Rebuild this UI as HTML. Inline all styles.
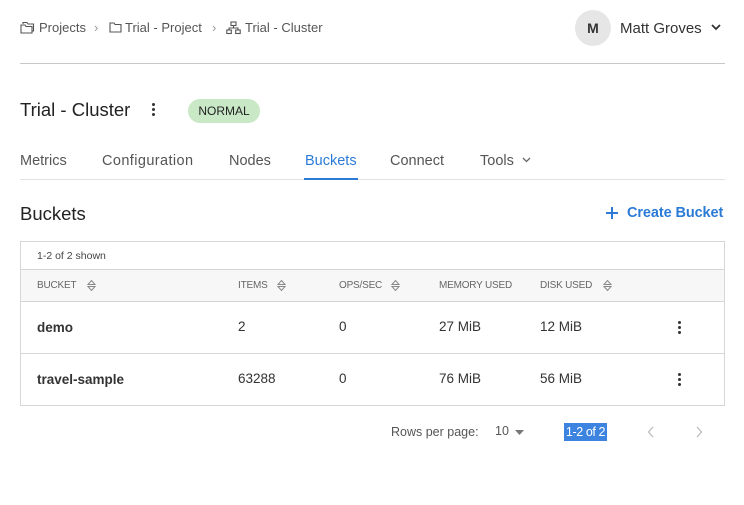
<!DOCTYPE html>
<html><head><meta charset="utf-8"><style>
*{margin:0;padding:0;box-sizing:border-box}
body{width:744px;height:505px;background:#fff;font-family:"Liberation Sans",sans-serif;color:#222;position:relative;overflow:hidden}
.a{position:absolute;white-space:nowrap}
.bc{font-size:13px;color:#555;top:20px}
.tab{font-size:14.5px;color:#555;top:153px}
.th{font-size:10px;color:#666;top:280px;letter-spacing:-0.2px}
.td{font-size:13.5px;color:#333}
.k{position:absolute;width:3px;height:3px;background:#333;border-radius:50%}
svg{position:absolute}
.s{position:absolute;top:279px}
</style></head><body>
<svg style="left:20px;top:21px" width="15" height="13" viewBox="0 0 15 13" fill="none" stroke="#555" stroke-width="1.1"><path d="M3 3V1.5h4l1 1.5h5.5v7H12"/><path d="M1 4h4l1 1.5h6V12H1z"/></svg>
<div class="a bc" style="left:39px">Projects</div>
<div class="a bc" style="left:94px;color:#999">›</div>
<svg style="left:109px;top:22px" width="13" height="11" viewBox="0 0 13 11" fill="none" stroke="#555" stroke-width="1.1"><path d="M1 1h4l1 1.5h6V10H1z"/></svg>
<div class="a bc" style="left:125px">Trial - Project</div>
<div class="a bc" style="left:212px;color:#999">›</div>
<svg style="left:226px;top:21px" width="15" height="14" viewBox="0 0 15 14" fill="none" stroke="#555" stroke-width="1.1"><rect x="5" y="1" width="5" height="3.5"/><path d="M7.5 4.5V7M3 9V7h9v2"/><rect x="0.8" y="9" width="4.5" height="3.5"/><rect x="9.7" y="9" width="4.5" height="3.5"/></svg>
<div class="a bc" style="left:245px">Trial - Cluster</div>
<div class="a" style="left:575px;top:10px;width:36px;height:36px;border-radius:50%;background:#e6e6e6;font-size:14px;font-weight:bold;color:#333;text-align:center;line-height:36px">M</div>
<div class="a" style="left:620px;top:20px;font-size:15px;color:#333">Matt Groves</div>
<svg style="left:711px;top:24px" width="10" height="7" viewBox="0 0 10 7" fill="none" stroke="#333" stroke-width="1.8"><path d="M1 1l4 4 4-4"/></svg>
<div class="a" style="left:20px;top:63px;width:705px;height:1px;background:#c8c8c8"></div>
<div class="a" style="left:20px;top:99px;font-size:18.5px;color:#222">Trial - Cluster</div>
<div class="k" style="left:152px;top:103px"></div><div class="k" style="left:152px;top:108px"></div><div class="k" style="left:152px;top:113px"></div>
<div class="a" style="left:188px;top:99px;width:72px;height:24px;border-radius:12px;background:#c9e8c6;font-size:12px;color:#222;text-align:center;line-height:24px">NORMAL</div>
<div class="a tab" style="left:20px">Metrics</div>
<div class="a tab" style="left:102px;letter-spacing:0.4px">Configuration</div>
<div class="a tab" style="left:229px">Nodes</div>
<div class="a tab" style="left:305px;color:#2b7bd6">Buckets</div>
<div class="a tab" style="left:390px">Connect</div>
<div class="a tab" style="left:480px">Tools</div>
<svg style="left:522px;top:157px" width="9" height="6" viewBox="0 0 9 6" fill="none" stroke="#666" stroke-width="1.3"><path d="M1 1l3.5 3.5L8 1"/></svg>
<div class="a" style="left:20px;top:179px;width:705px;height:1px;background:#e2e2e2"></div>
<div class="a" style="left:304px;top:178px;width:54px;height:2px;background:#2b7bd6"></div>
<div class="a" style="left:20px;top:203px;font-size:18.5px;color:#222">Buckets</div>
<svg style="left:605px;top:206px" width="14" height="14" viewBox="0 0 14 14" stroke="#2b7bd6" stroke-width="2"><path d="M7 1v12M1 7h12"/></svg>
<div class="a" style="left:627px;top:205px;font-size:14.5px;font-weight:bold;color:#2b7bd6;letter-spacing:-0.1px">Create Bucket</div>
<div class="a" style="left:20px;top:241px;width:705px;height:165px;border:1px solid #d6d6d6"></div>
<div class="a" style="left:37px;top:250px;font-size:10.5px;color:#444">1-2 of 2 shown</div>
<div class="a" style="left:21px;top:269px;width:703px;height:33px;background:#f7f7f7;border-top:1px solid #d6d6d6;border-bottom:1px solid #d6d6d6"></div>
<div class="a th" style="left:37px">BUCKET</div>
<div class="a th" style="left:238px">ITEMS</div>
<div class="a th" style="left:339px">OPS/SEC</div>
<div class="a th" style="left:439px">MEMORY USED</div>
<div class="a th" style="left:540px">DISK USED</div>
<svg class="s" style="left:87px" width="9" height="13" viewBox="0 0 9 13" fill="none" stroke="#888" stroke-width="1"><path d="M1 5.5L4.5 1.5 8 5.5zM1 7.5L4.5 11.5 8 7.5z"/></svg>
<svg class="s" style="left:277px" width="9" height="13" viewBox="0 0 9 13" fill="none" stroke="#888" stroke-width="1"><path d="M1 5.5L4.5 1.5 8 5.5zM1 7.5L4.5 11.5 8 7.5z"/></svg>
<svg class="s" style="left:391px" width="9" height="13" viewBox="0 0 9 13" fill="none" stroke="#888" stroke-width="1"><path d="M1 5.5L4.5 1.5 8 5.5zM1 7.5L4.5 11.5 8 7.5z"/></svg>
<svg class="s" style="left:603px" width="9" height="13" viewBox="0 0 9 13" fill="none" stroke="#888" stroke-width="1"><path d="M1 5.5L4.5 1.5 8 5.5zM1 7.5L4.5 11.5 8 7.5z"/></svg>
<div class="a td" style="left:37px;top:320px;font-weight:bold">demo</div>
<div class="a td" style="left:238px;top:319px">2</div>
<div class="a td" style="left:339px;top:319px">0</div>
<div class="a td" style="left:439px;top:319px">27 MiB</div>
<div class="a td" style="left:540px;top:319px">12 MiB</div>
<div class="k" style="left:678px;top:321px"></div><div class="k" style="left:678px;top:326px"></div><div class="k" style="left:678px;top:331px"></div>
<div class="a" style="left:21px;top:353px;width:703px;height:1px;background:#d6d6d6"></div>
<div class="a td" style="left:37px;top:372px;font-weight:bold">travel-sample</div>
<div class="a td" style="left:238px;top:371px">63288</div>
<div class="a td" style="left:339px;top:371px">0</div>
<div class="a td" style="left:439px;top:371px">76 MiB</div>
<div class="a td" style="left:540px;top:371px">56 MiB</div>
<div class="k" style="left:678px;top:373px"></div><div class="k" style="left:678px;top:378px"></div><div class="k" style="left:678px;top:383px"></div>
<div class="a" style="left:391px;top:425px;font-size:12.5px;color:#555">Rows per page:</div>
<div class="a" style="left:495px;top:424px;font-size:12.5px;color:#555">10</div>
<svg style="left:515px;top:430px" width="9" height="5" viewBox="0 0 9 5"><path d="M0 0h9L4.5 5z" fill="#777"/></svg>
<div class="a" style="left:564px;top:423px;width:43px;height:18px;background:#3d84e0;color:#fff;font-size:12.5px;line-height:18px;text-align:center;letter-spacing:-0.4px">1-2 of 2</div>
<svg style="left:647px;top:426px" width="8" height="12" viewBox="0 0 8 12" fill="none" stroke="#bbb" stroke-width="1.3"><path d="M6 1L1.5 6 6 11"/></svg>
<svg style="left:695px;top:426px" width="8" height="12" viewBox="0 0 8 12" fill="none" stroke="#bbb" stroke-width="1.3"><path d="M2 1l4.5 5L2 11"/></svg>
</body></html>
